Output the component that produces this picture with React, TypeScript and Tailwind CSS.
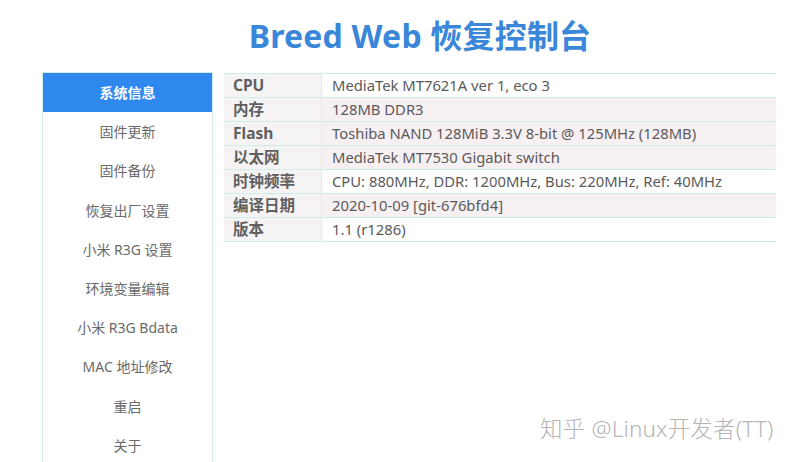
import React from "react";

const menu = [
  "系统信息",
  "固件更新",
  "固件备份",
  "恢复出厂设置",
  "小米 R3G 设置",
  "环境变量编辑",
  "小米 R3G Bdata",
  "MAC 地址修改",
  "重启",
  "关于",
];

const rows: [string, string, boolean][] = [
  ["CPU", "MediaTek MT7621A ver 1, eco 3", false],
  ["内存", "128MB DDR3", true],
  ["Flash", "Toshiba NAND 128MiB 3.3V 8-bit @ 125MHz (128MB)", true],
  ["以太网", "MediaTek MT7530 Gigabit switch", true],
  ["时钟频率", "CPU: 880MHz, DDR: 1200MHz, Bus: 220MHz, Ref: 40MHz", false],
  ["编译日期", "2020-10-09 [git-676bfd4]", true],
  ["版本", "1.1 (r1286)", false],
];

export default function App() {
  return (
    <div
      className="relative w-[793px] h-[462px] overflow-hidden bg-white"
      style={{ fontFamily: '"Noto Sans", "Noto Sans CJK SC", sans-serif' }}
    >
      <div className="h-[71px] pt-[14px] pl-[47px] flex justify-center">
        <h1 className="text-[32px] leading-[44px] font-bold text-[#3a87d9] tracking-[0.2px]">
          Breed Web 恢复控制台
        </h1>
      </div>
      <div className="flex pl-[42px] pt-[1px] gap-[11px]">
        <div className="w-[171px] h-[400px] border border-[#cfeeea] flex flex-col">
          {menu.map((m, i) => (
            <div
              key={m}
              className={
                i === 0
                  ? "h-[39.2px] shrink-0 flex items-center justify-center bg-[#2f88ee] text-white font-bold text-[14px]"
                  : "h-[39.2px] shrink-0 flex items-center justify-center text-[#6a6a6a] text-[14px]"
              }
            >
              {m}
            </div>
          ))}
        </div>
        <div className="w-[552px] pt-[1px]">
          <div className="border-b border-[#cdeee8]">
            {rows.map(([k, v, shade]) => (
              <div key={k} className="flex h-[24px] border-t border-[#cdeee8]">
                <div className="w-[98px] shrink-0 bg-[#f6f3f4] border-r border-[#dfeeea] pl-[9px] flex items-center font-bold text-[15.5px] text-[#606060]">
                  {k}
                </div>
                <div
                  className={
                    shade
                      ? "flex-1 bg-[#f7f0f3] pl-[10px] flex items-center text-[14.8px] text-[#5a5a5a]"
                      : "flex-1 bg-white pl-[10px] flex items-center text-[14.8px] text-[#5a5a5a]"
                  }
                >
                  {v}
                </div>
              </div>
            ))}
          </div>
        </div>
      </div>
      <div className="absolute left-[540px] top-[412px] text-[22.5px] font-light text-[#b5b5b5] tracking-[0.2px]">
        知乎 @Linux开发者(TT)
      </div>
    </div>
  );
}
